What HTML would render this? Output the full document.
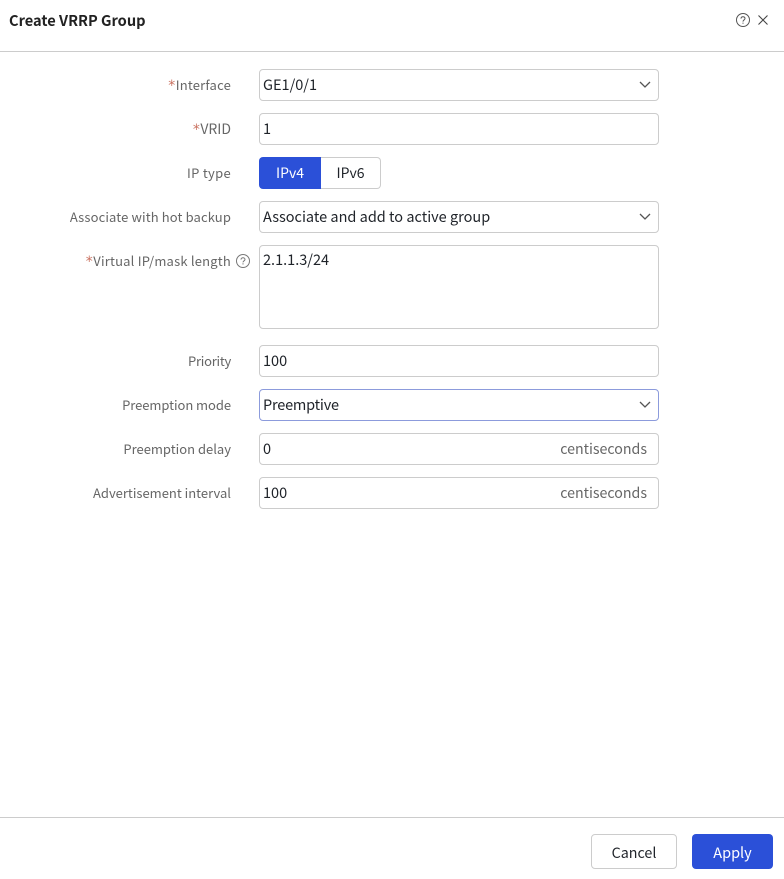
<!DOCTYPE html>
<html><head><meta charset="utf-8">
<style>
html,body{margin:0;padding:0;background:#fff}
body{width:784px;height:879px;position:relative;overflow:hidden;font-family:"Noto Sans CJK SC","Liberation Sans",sans-serif;font-size:14px;color:#1f2329}
.t{position:absolute;white-space:nowrap;line-height:20px}
.l{position:absolute;right:553px;white-space:nowrap;line-height:20px;color:#666;font-size:13px}
.l i{font-style:normal;color:#c9705f;font-family:"DejaVu Sans",sans-serif;font-size:14px;line-height:0;letter-spacing:.5px}
.b{position:absolute;left:259px;width:398px;height:30px;border:1px solid #ccc;border-radius:4px;background:#fff}
.v{position:absolute;left:263px;white-space:nowrap;line-height:20px;color:#1f2329;font-size:14.5px}
.u{position:absolute;right:137px;white-space:nowrap;line-height:20px;color:#666;font-size:14.2px}
.hr{position:absolute;left:0;width:784px;height:1px;background:#ccc}
svg{position:absolute}
</style></head><body>
<div class="t" style="left:9px;top:11px;font-weight:700;font-size:14.6px;color:#222">Create VRRP Group</div>
<svg style="left:736px;top:13px" width="15" height="15" viewBox="0 0 15 15" fill="none" stroke="#555"><circle cx="7" cy="7" r="6.5"/><path d="M5 5.600C5 4.400 5.900 3.700 7 3.700s2 .7 2 1.800c0 1.400-2 1.500-2 3.100" stroke-width="1"/><path d="M7 9.600v1.200" stroke-width="1"/></svg>
<svg style="left:757px;top:14px" width="12" height="12" viewBox="0 0 12 12" fill="none" stroke="#444" stroke-width="1.1"><path d="M1.500 1.500l9 9M10.500 1.500l-9 9"/></svg>
<div class="hr" style="top:51px"></div>

<div class="l" style="top:75px;letter-spacing:.2px"><i>*</i>Interface</div>
<div class="b" style="top:69px"></div><div class="v" style="top:75px">GE1/0/1</div>
<svg style="left:639px;top:81px" width="12" height="8" viewBox="0 0 12 8" fill="none" stroke="#555" stroke-width="1.3"><path d="M1 1l5 5 5-5"/></svg>

<div class="l" style="top:119px;font-size:14px"><i>*</i>VRID</div>
<div class="b" style="top:113px"></div><div class="v" style="top:119px">1</div>

<div class="l" style="top:163px;letter-spacing:.3px">IP type</div>
<div style="position:absolute;left:259px;top:157px;width:62px;height:32px;background:#2b50d8;border-radius:4px 0 0 4px;color:#fff;text-align:center;line-height:32px">IPv4</div>
<div style="position:absolute;left:321px;top:157px;width:59px;height:30px;border:1px solid #ccc;border-left:0;border-radius:0 4px 4px 0;text-align:center;line-height:30px">IPv6</div>

<div class="l" style="top:207px;letter-spacing:.12px">Associate with hot backup</div>
<div class="b" style="top:201px"></div><div class="v" style="top:207px">Associate and add to active group</div>
<svg style="left:639px;top:213px" width="12" height="8" viewBox="0 0 12 8" fill="none" stroke="#555" stroke-width="1.3"><path d="M1 1l5 5 5-5"/></svg>

<div class="l" style="top:251px;letter-spacing:.2px"><i>*</i>Virtual IP/mask length</div>
<svg style="left:236px;top:254px" width="14" height="14" viewBox="0 0 14 14" fill="none" stroke="#777"><circle cx="7" cy="7" r="6.500"/><path d="M5 5.600C5 4.500 5.900 3.800 7 3.800s2 .7 2 1.700C9 6.800 7 6.900 7 8.400M7 9.300v1.200" stroke-width="1"/></svg>
<div class="b" style="top:245px;height:82px"></div><div class="v" style="top:250px">2.1.1.3/24</div>

<div class="l" style="top:351px;letter-spacing:-.25px">Priority</div>
<div class="b" style="top:345px"></div><div class="v" style="top:351px">100</div>

<div class="l" style="top:395px;letter-spacing:-.06px">Preemption mode</div>
<div class="b" style="top:389px;border-color:#8c9bdc"></div><div class="v" style="top:395px;letter-spacing:-.2px">Preemptive</div>
<svg style="left:639px;top:401px" width="12" height="8" viewBox="0 0 12 8" fill="none" stroke="#555" stroke-width="1.3"><path d="M1 1l5 5 5-5"/></svg>

<div class="l" style="top:439px">Preemption delay</div>
<div class="b" style="top:433px"></div><div class="v" style="top:439px">0</div><div class="u" style="top:439px">centiseconds</div>

<div class="l" style="top:483px">Advertisement interval</div>
<div class="b" style="top:477px"></div><div class="v" style="top:483px">100</div><div class="u" style="top:483px">centiseconds</div>

<div class="hr" style="top:817px"></div>
<div style="position:absolute;left:591px;top:834px;width:84px;height:33px;border:1px solid #ccc;border-radius:4px;text-align:center;line-height:36px;font-size:14.3px">Cancel</div>
<div style="position:absolute;left:692px;top:834px;width:81px;height:35px;background:#2b50d8;border-radius:4px;color:#fff;text-align:center;line-height:38px;font-size:14.5px">Apply</div>
</body></html>
